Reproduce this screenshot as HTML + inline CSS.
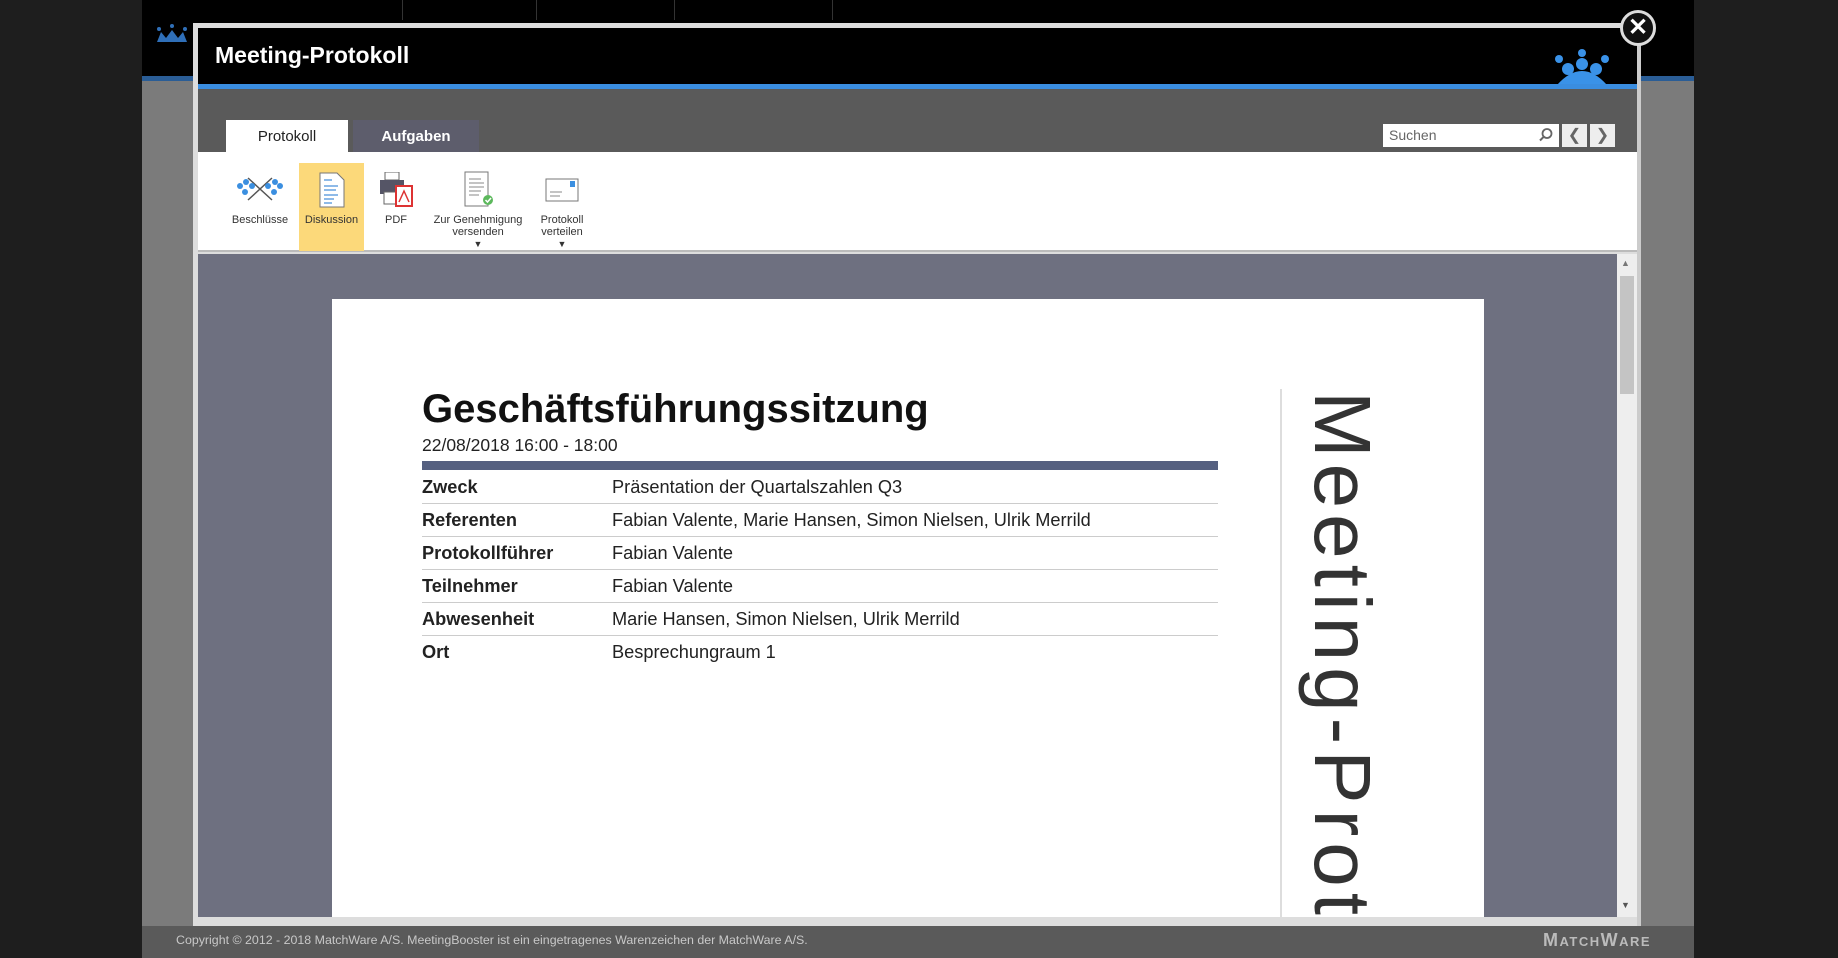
<!DOCTYPE html>
<html><head><meta charset="utf-8"><style>
*{margin:0;padding:0;box-sizing:border-box}
html,body{width:1838px;height:958px;overflow:hidden}
body{background:#1e1e1e;font-family:"Liberation Sans",sans-serif;position:relative}
.a{position:absolute}
</style></head><body>
<div class="a" style="left:142px;top:0;width:1552px;height:958px;background:#7b7b7b"></div>
<div class="a" style="left:142px;top:0;width:1552px;height:76px;background:#000"></div>
<div class="a" style="left:402px;top:0;width:1px;height:20px;background:#333"></div>
<div class="a" style="left:536px;top:0;width:1px;height:20px;background:#333"></div>
<div class="a" style="left:674px;top:0;width:1px;height:20px;background:#333"></div>
<div class="a" style="left:832px;top:0;width:1px;height:20px;background:#333"></div>
<div class="a" style="left:142px;top:76px;width:1552px;height:5px;background:#2a5d96"></div>
<svg class="a" style="left:155px;top:24px" width="34" height="20" viewBox="0 0 34 20"><g fill="#2f6fb8"><circle cx="4" cy="5" r="2"/><circle cx="17" cy="2" r="2"/><circle cx="30" cy="5" r="2"/><path d="M2 18 L6 8 L11 14 L17 6 L23 14 L28 8 L32 18Z"/></g></svg>
<div class="a" style="left:142px;top:926px;width:1552px;height:32px;background:#5a5a5a"></div>
<div class="a" style="left:176px;top:933px;font-size:12.4px;color:#c8c8c8">Copyright © 2012 - 2018 MatchWare A/S. MeetingBooster ist ein eingetragenes Warenzeichen der MatchWare A/S.</div>
<div class="a" style="left:1543px;top:930px;font-size:18px;font-weight:bold;color:#bbb;letter-spacing:1.5px;font-variant:small-caps">MatchWare</div>

<!-- modal -->
<div class="a" style="left:193px;top:23px;width:1448px;height:903px;background:#ddd"></div>
<div class="a" style="left:198px;top:28px;width:1439px;height:56px;background:#000"></div>
<div class="a" style="left:215px;top:42px;font-size:23px;font-weight:bold;color:#fff">Meeting-Protokoll</div>
<svg class="a" style="left:1553px;top:49px" width="58" height="36" viewBox="0 0 58 36"><g fill="#3a92e8"><circle cx="6" cy="10" r="4"/><circle cx="29" cy="4" r="4"/><circle cx="52" cy="10" r="4"/><circle cx="15" cy="20" r="6"/><circle cx="29" cy="15" r="6"/><circle cx="43" cy="20" r="6"/><path d="M4 36 Q29 8 54 36Z"/></g></svg>
<div class="a" style="left:198px;top:84px;width:1439px;height:5px;background:#3a8de0"></div>
<div class="a" style="left:198px;top:89px;width:1439px;height:63px;background:#5a5a5a"></div>
<div class="a" style="left:226px;top:120px;width:122px;height:32px;background:#fff;font-size:15px;color:#222;text-align:center;line-height:34px">Protokoll</div>
<div class="a" style="left:353px;top:120px;width:126px;height:32px;background:#5d5d6c;font-size:15px;font-weight:bold;color:#fff;text-align:center;line-height:34px">Aufgaben</div>
<div class="a" style="left:1383px;top:124px;width:176px;height:23px;background:#fff;font-size:14px;color:#666;padding:3px 6px">Suchen</div>
<svg class="a" style="left:1538px;top:127px" width="16" height="16" viewBox="0 0 16 16"><circle cx="9" cy="6.5" r="4.5" fill="none" stroke="#666" stroke-width="1.8"/><path d="M5.8 9.7 L2 13.5" stroke="#666" stroke-width="2"/></svg>
<div class="a" style="left:1562px;top:124px;width:25px;height:23px;background:#eee;color:#666;font-size:16px;text-align:center;line-height:23px">❮</div>
<div class="a" style="left:1590px;top:124px;width:25px;height:23px;background:#eee;color:#666;font-size:16px;text-align:center;line-height:23px">❯</div>

<div class="a" style="left:198px;top:152px;width:1439px;height:100px;background:#fff;border-bottom:2px solid #bbb"></div>
<div class="a" style="left:299px;top:163px;width:65px;height:88px;background:#fcd97a"></div>
<svg class="a" style="left:236px;top:174px" width="48" height="30" viewBox="0 0 48 30"><path d="M12 4 L36 26 M36 4 L12 26" stroke="#555" stroke-width="1.5"/><g fill="#3b8fe0"><circle cx="4" cy="12" r="3"/><circle cx="10" cy="8" r="3"/><circle cx="9" cy="18" r="3"/><circle cx="16" cy="12" r="3"/><circle cx="32" cy="12" r="3"/><circle cx="39" cy="8" r="3"/><circle cx="38" cy="18" r="3"/><circle cx="44" cy="12" r="3"/></g></svg>
<svg class="a" style="left:318px;top:172px" width="28" height="36" viewBox="0 0 28 36"><path d="M2 1 H19 L26 8 V35 H2Z" fill="#fff" stroke="#777"/><g stroke="#4a90d9" stroke-width="1.2"><path d="M6 8h8M6 14h14M6 18h12M6 23h14M6 27h10M6 31h8"/></g></svg>
<svg class="a" style="left:380px;top:172px" width="34" height="36" viewBox="0 0 34 36"><rect x="5" y="0" width="14" height="8" fill="#fff" stroke="#666"/><rect x="0" y="8" width="24" height="14" fill="#556"/><rect x="4" y="20" width="16" height="12" fill="#fff" stroke="#666"/><rect x="16" y="14" width="16" height="20" fill="#fff" stroke="#d33" stroke-width="2"/><path d="M19 30 L24 19 L29 30" stroke="#d33" fill="none" stroke-width="1.5"/></svg>
<svg class="a" style="left:464px;top:171px" width="30" height="36" viewBox="0 0 30 36"><path d="M1 1 H24 V35 H1Z" fill="#fff" stroke="#777"/><g stroke="#888"><path d="M5 8h12M5 12h15M5 16h15M5 20h12M5 24h10"/></g><circle cx="24" cy="29" r="5" fill="#5cb85c"/><path d="M21.5 29 L23.5 31 L27 27" stroke="#fff" fill="none" stroke-width="1.5"/></svg>
<svg class="a" style="left:545px;top:178px" width="34" height="24" viewBox="0 0 34 24"><rect x="1" y="1" width="32" height="22" fill="#fff" stroke="#777"/><rect x="25" y="3" width="5" height="6" fill="#3b8fe0"/><path d="M5 14h12M5 18h10" stroke="#888"/></svg>
<div class="a" style="left:224px;top:214px;width:72px;text-align:center;font-size:11px;color:#333">Beschlüsse</div>
<div class="a" style="left:299px;top:214px;width:65px;text-align:center;font-size:11px;color:#333">Diskussion</div>
<div class="a" style="left:376px;top:214px;width:40px;text-align:center;font-size:11px;color:#333">PDF</div>
<div class="a" style="left:428px;top:214px;width:100px;text-align:center;font-size:11px;color:#333;line-height:12px">Zur Genehmigung<br>versenden<br><span style="font-size:9px">▼</span></div>
<div class="a" style="left:526px;top:214px;width:72px;text-align:center;font-size:11px;color:#333;line-height:12px">Protokoll<br>verteilen<br><span style="font-size:9px">▼</span></div>

<div class="a" style="left:198px;top:254px;width:1419px;height:663px;background:#6e7080"></div>
<div class="a" style="left:1617px;top:254px;width:20px;height:663px;background:#eee"></div>
<div class="a" style="left:1620px;top:276px;width:14px;height:118px;background:#c4c4c4"></div>
<div class="a" style="left:1621px;top:258px;font-size:9px;color:#777">▲</div>
<div class="a" style="left:1621px;top:900px;font-size:9px;color:#555">▼</div>
<div class="a" style="left:1637px;top:28px;width:4px;height:898px;background:#ccc"></div>

<!-- page -->
<div class="a" style="left:332px;top:299px;width:1152px;height:618px;background:#fff;overflow:hidden">
 <div class="a" style="left:90px;top:88px;font-size:40px;font-weight:bold;color:#111;white-space:nowrap">Geschäftsführungssitzung</div>
 <div class="a" style="left:90px;top:136px;font-size:17.5px;color:#222">22/08/2018 16:00 - 18:00</div>
 <div class="a" style="left:90px;top:162px;width:796px;height:9px;background:#556080"></div>
 <div class="a" style="left:90px;top:172px;width:796px;font-size:18.2px;color:#222">
  <div style="height:33px;line-height:33px;border-bottom:1px solid #ccc;display:flex"><b style="width:190px">Zweck</b><span>Präsentation der Quartalszahlen Q3</span></div>
  <div style="height:33px;line-height:33px;border-bottom:1px solid #ccc;display:flex"><b style="width:190px">Referenten</b><span>Fabian Valente, Marie Hansen, Simon Nielsen, Ulrik Merrild</span></div>
  <div style="height:33px;line-height:33px;border-bottom:1px solid #ccc;display:flex"><b style="width:190px">Protokollführer</b><span>Fabian Valente</span></div>
  <div style="height:33px;line-height:33px;border-bottom:1px solid #ccc;display:flex"><b style="width:190px">Teilnehmer</b><span>Fabian Valente</span></div>
  <div style="height:33px;line-height:33px;border-bottom:1px solid #ccc;display:flex"><b style="width:190px">Abwesenheit</b><span>Marie Hansen, Simon Nielsen, Ulrik Merrild</span></div>
  <div style="height:33px;line-height:33px;display:flex"><b style="width:190px">Ort</b><span>Besprechungraum 1</span></div>
 </div>
 <div class="a" style="left:948px;top:90px;width:2px;height:540px;background:#ddd"></div>
 <div class="a" style="left:970px;top:92px;writing-mode:vertical-rl;font-size:80px;line-height:80px;color:#333;letter-spacing:6px;font-weight:normal;white-space:nowrap">Meeting-Protokoll</div>
</div>

<div class="a" style="left:1620px;top:10px;width:36px;height:36px;border-radius:50%;background:#111;border:3px solid #ddd;color:#fff;font-size:24px;font-weight:bold;text-align:center;line-height:29px">✕</div>
</body></html>
